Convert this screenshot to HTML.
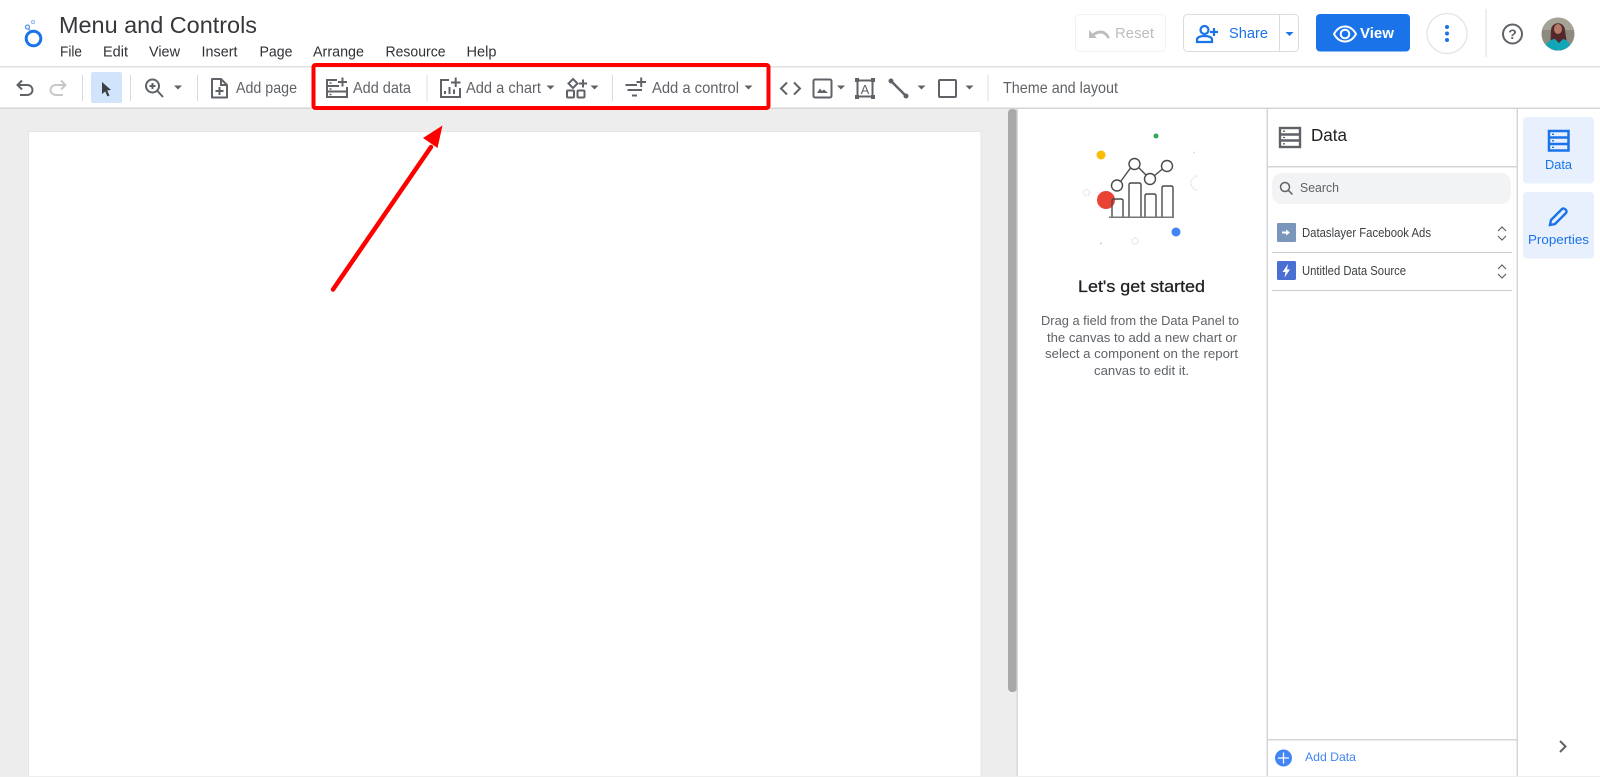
<!DOCTYPE html>
<html><head><meta charset="utf-8"><style>
html,body{margin:0;padding:0;width:1600px;height:777px;overflow:hidden;background:#fff}
svg{display:block}
text{font-family:"Liberation Sans",sans-serif}
.m{font-size:15px;fill:#2f3134}
.t{font-size:16px;fill:#5f6368}
.i{fill:none;stroke:#5f6368;stroke-width:2}
.p{font-size:12.5px;fill:#5f6368}
</style></head><body>
<svg width="1600" height="777" viewBox="0 0 1600 777" xmlns="http://www.w3.org/2000/svg">
<!-- backgrounds -->
<rect x="0" y="108" width="1017" height="669" fill="#ededed"/>
<rect x="28.500" y="131.500" width="952.500" height="660" fill="#fff" stroke="#e6e6e6" stroke-width="1"/>
<rect x="0" y="66" width="1600" height="1.500" fill="#e0e0e0"/>
<rect x="0" y="107.500" width="1600" height="1.500" fill="#d4d5d7"/>
<rect x="1008" y="109" width="9" height="583" rx="4" fill="#a8a8a8"/>
<rect x="1016.500" y="109" width="1.500" height="668" fill="#d8d9db"/>
<rect x="1266.500" y="109" width="1.500" height="668" fill="#d4d5d7"/>
<rect x="1516.500" y="109" width="1.500" height="668" fill="#d4d5d7"/>
<rect x="0" y="776" width="1600" height="1" fill="#eeeeee"/>

<!-- logo -->
<circle cx="33.500" cy="38.500" r="7.300" fill="none" stroke="#1a73e8" stroke-width="3"/>
<circle cx="27.500" cy="27" r="2" fill="none" stroke="#5c93ea" stroke-width="1.300"/>
<circle cx="33" cy="22" r="1.500" fill="none" stroke="#8ab4f8" stroke-width="1"/>
<path d="M28.500 29L30.500 31" stroke="#5c93ea" stroke-width="1.300"/>

<!-- title/menu -->
<text x="59" y="33" font-size="23" fill="#35373a" textLength="198" lengthAdjust="spacingAndGlyphs">Menu and Controls</text>
<text class="m" x="60" y="56.500" textLength="22" lengthAdjust="spacingAndGlyphs">File</text>
<text class="m" x="103" y="56.500" textLength="25" lengthAdjust="spacingAndGlyphs">Edit</text>
<text class="m" x="149" y="56.500" textLength="31" lengthAdjust="spacingAndGlyphs">View</text>
<text class="m" x="201.500" y="56.500" textLength="36" lengthAdjust="spacingAndGlyphs">Insert</text>
<text class="m" x="259.500" y="56.500" textLength="33" lengthAdjust="spacingAndGlyphs">Page</text>
<text class="m" x="313" y="56.500" textLength="51" lengthAdjust="spacingAndGlyphs">Arrange</text>
<text class="m" x="385.500" y="56.500" textLength="60" lengthAdjust="spacingAndGlyphs">Resource</text>
<text class="m" x="466.500" y="56.500" textLength="30" lengthAdjust="spacingAndGlyphs">Help</text>

<!-- top right -->
<rect x="1075.500" y="14.500" width="90" height="37" rx="4" fill="#fff" stroke="#f1f1f1"/>
<path d="M1089 30L1092.500 33.500C1095 31.500 1098 30.500 1100.500 30.500C1105 30.500 1108 33.500 1110 38L1107.500 38.500C1105.500 35 1103 33.500 1100.500 33.500C1098.500 33.500 1096.500 34.500 1094.500 35.500L1097 38H1089Z" fill="#bdbdbd"/>
<text x="1115" y="38" font-size="15" fill="#bdbdbd" textLength="39" lengthAdjust="spacingAndGlyphs">Reset</text>
<rect x="1183.500" y="14.500" width="115" height="37" rx="4" fill="#fff" stroke="#dadce0"/>
<path d="M1279.500 14.500V51.500" stroke="#dadce0"/>
<circle cx="1204.500" cy="30" r="4" fill="none" stroke="#1a73e8" stroke-width="2.200"/>
<path d="M1197 42V39.500C1197 37 1201 36 1204.500 36C1208 36 1212 37 1212 39.500V42Z" fill="none" stroke="#1a73e8" stroke-width="2.200"/>
<path d="M1210 32H1218M1214 28V36" stroke="#1a73e8" stroke-width="2.200" fill="none"/>
<text x="1229" y="38" font-size="15" fill="#1a73e8" textLength="39" lengthAdjust="spacingAndGlyphs">Share</text>
<path d="M1285.500 32H1293.500L1289.500 36Z" fill="#1a73e8"/>
<rect x="1316" y="14" width="94" height="37.500" rx="4" fill="#1a73e8"/>
<path d="M1334 34C1337 28.500 1341 26.500 1345 26.500C1349 26.500 1353 28.500 1356 34C1353 39.500 1349 41.500 1345 41.500C1341 41.500 1337 39.500 1334 34Z" fill="none" stroke="#fff" stroke-width="2"/>
<circle cx="1345" cy="34" r="4.300" fill="none" stroke="#fff" stroke-width="2"/>
<text x="1360" y="38" font-size="15" font-weight="bold" fill="#fff" textLength="34" lengthAdjust="spacingAndGlyphs">View</text>
<circle cx="1447" cy="33.500" r="20" fill="#fff" stroke="#e4e5e7" stroke-width="1.300"/>
<circle cx="1447" cy="27" r="2" fill="#1a73e8"/><circle cx="1447" cy="33.500" r="2" fill="#1a73e8"/><circle cx="1447" cy="40" r="2" fill="#1a73e8"/>
<rect x="1485.500" y="9" width="1" height="48" fill="#dadce0"/>
<circle cx="1512.500" cy="34" r="9.500" fill="none" stroke="#5f6368" stroke-width="2"/>
<text x="1512.500" y="39" text-anchor="middle" font-size="14" font-weight="bold" fill="#5f6368">?</text>
<clipPath id="av"><circle cx="1558" cy="34" r="16.500"/></clipPath>
<g clip-path="url(#av)">
<rect x="1541" y="17" width="34" height="34" fill="#8d8a80"/>
<rect x="1541" y="17" width="34" height="13" fill="#a5a296"/>
<path d="M1550 51L1551 30C1552 21 1564 21 1565 30L1568 51Z" fill="#54282b"/>
<ellipse cx="1558" cy="29" rx="4" ry="5" fill="#b57a6a"/>
<path d="M1543 51C1545 43 1551 39 1555 39L1559 43L1563 39C1568 40 1571 45 1572 51Z" fill="#11a5b8"/>
</g>

<!-- toolbar -->
<path d="M18 85H27C31 85 32.500 88 32.500 90C32.500 92.500 30.500 95 27 95H20M22 80.500L17.500 85L22 89.500" class="i"/>
<path d="M65 85H56C52 85 50.500 88 50.500 90C50.500 92.500 52.500 95 56 95H63M61 80.500L65.500 85L61 89.500" fill="none" stroke="#c6c8ca" stroke-width="2"/>
<rect x="82" y="75" width="1" height="26" fill="#dadce0"/>
<rect x="91" y="72" width="31" height="31" rx="2" fill="#d2e3fc"/>
<path d="M102 82L111 90L107.200 90.500L109.500 95.500L107.500 96.500L105.200 91.500L102 94Z" fill="#3c4043"/>
<rect x="130" y="75" width="1" height="26" fill="#dadce0"/>
<circle cx="152.500" cy="86" r="6.500" class="i"/>
<path d="M157.500 91L163 97M149.500 86H155.500M152.500 83V89" class="i"/>
<path d="M174 85.500H182L178 89.500Z" fill="#5f6368"/>
<rect x="197" y="75" width="1" height="26" fill="#dadce0"/>
<path d="M212 79H221L227 85V97.500H212Z" class="i" stroke-linejoin="round"/>
<path d="M221 79V85H227M215.500 91H223.500M219.500 87V95" class="i"/>
<text class="t" x="236" y="93" textLength="61" lengthAdjust="spacingAndGlyphs">Add page</text>

<!-- add data group -->
<path d="M337 80H327V97H347V87M327 86H339M327 91.500H347" class="i"/>
<path d="M329.500 83H331.500M329.500 89H331.500M329.500 94.500H331.500" stroke="#5f6368" stroke-width="1.500"/>
<path d="M338 82H347M342.500 77.500V86.500" class="i"/>
<text class="t" x="353" y="93" textLength="58" lengthAdjust="spacingAndGlyphs">Add data</text>
<rect x="426.500" y="75" width="1" height="26" fill="#dadce0"/>
<path d="M449 80H441V97H460V88" class="i"/>
<path d="M445 91V94M449.500 87V94M454 89.500V94" class="i"/>
<path d="M451 82.500H460.500M455.700 77.500V87" class="i"/>
<text class="t" x="466" y="93" textLength="75" lengthAdjust="spacingAndGlyphs">Add a chart</text>
<path d="M546.500 85.500H554.500L550.500 89.500Z" fill="#5f6368"/>
<path d="M573 79L577.500 83.500L573 88L568.500 83.500Z" class="i"/>
<path d="M579 83.500H587M583 79.500V87.500" class="i"/>
<rect x="567" y="90.500" width="7" height="7" rx="1" class="i"/>
<rect x="577.500" y="90.500" width="7" height="7" rx="1" class="i"/>
<path d="M590.500 85.500H598.500L594.500 89.500Z" fill="#5f6368"/>
<rect x="612" y="75" width="1" height="26" fill="#dadce0"/>
<path d="M625.500 85H637M627.500 90H642M632 95.500H637" class="i"/>
<path d="M636.500 82H646M641.200 77.500V87" class="i"/>
<text class="t" x="652" y="93" textLength="87" lengthAdjust="spacingAndGlyphs">Add a control</text>
<path d="M744.500 85.500H752.500L748.500 89.500Z" fill="#5f6368"/>

<!-- red box & arrow -->
<rect x="313.500" y="65" width="455" height="43" rx="2" fill="none" stroke="#fe0000" stroke-width="4"/>
<path d="M333 289.500L431 147" stroke="#fe0000" stroke-width="4.500" stroke-linecap="round"/>
<path d="M442.500 125.500L423 138L437.500 148Z" fill="#fe0000"/>

<!-- right tools -->
<path d="M787 82.500L781 88.500L787 94.500M794 82.500L800 88.500L794 94.500" class="i"/>
<rect x="813.500" y="79.500" width="18" height="18" rx="1.500" class="i"/>
<path d="M817 93L820 88.500L822 91L824 89.500L828 93Z" fill="#5f6368"/>
<path d="M837 85.500H845L841 89.500Z" fill="#5f6368"/>
<rect x="857.500" y="80.500" width="15" height="16" class="i"/>
<rect x="855" y="78" width="4" height="4" fill="#5f6368"/><rect x="871" y="78" width="4" height="4" fill="#5f6368"/><rect x="855" y="95" width="4" height="4" fill="#5f6368"/><rect x="871" y="95" width="4" height="4" fill="#5f6368"/>
<text x="865" y="94" text-anchor="middle" font-size="13" fill="#5f6368">A</text>
<path d="M891 81L906 96" stroke="#5f6368" stroke-width="2.500"/>
<circle cx="891" cy="81" r="2.500" fill="#5f6368"/><circle cx="906" cy="96" r="2.500" fill="#5f6368"/>
<path d="M917.500 85.500H925.500L921.500 89.500Z" fill="#5f6368"/>
<rect x="939" y="80" width="17" height="17" rx="1" class="i"/>
<path d="M965.500 85.500H973.500L969.500 89.500Z" fill="#5f6368"/>
<rect x="987.500" y="75" width="1" height="26" fill="#dadce0"/>
<text class="t" x="1003" y="93" textLength="115" lengthAdjust="spacingAndGlyphs">Theme and layout</text>

<!-- illustration -->
<circle cx="1101" cy="155" r="4.500" fill="#fbbc04"/>
<circle cx="1156" cy="136" r="2.500" fill="#34a853"/>
<circle cx="1106" cy="200" r="9" fill="#ea4335"/>
<circle cx="1176" cy="232" r="4.500" fill="#4285f4"/>
<g fill="none" stroke="#4a4a4a" stroke-width="1.400">
<path d="M1112 217V201C1112 199.500 1113 199 1114 199H1121C1122 199 1123 199.500 1123 201V217"/>
<path d="M1129 217V185C1129 183.500 1130 183 1131 183H1139C1140 183 1141 183.500 1141 185V217"/>
<path d="M1145 217V196C1145 194.500 1146 194 1147 194H1154C1155 194 1156 194.500 1156 196V217"/>
<path d="M1162 217V188C1162 186.500 1163 186 1164 186H1171C1172 186 1173 186.500 1173 188V217"/>
<circle cx="1117" cy="185.500" r="5.500"/><circle cx="1134.500" cy="164" r="5.500"/><circle cx="1150" cy="179" r="5.500"/><circle cx="1167" cy="166" r="5.500"/>
<path d="M1121 181L1130.500 168M1139 168L1146 175M1154 176L1162.500 169"/>
</g>
<rect x="1109" y="216.500" width="65" height="1.500" fill="#777"/>
<circle cx="1086.500" cy="192.500" r="3" fill="none" stroke="#ddd" stroke-dasharray="1 1" stroke-width="1.500"/>
<circle cx="1135" cy="241" r="3" fill="none" stroke="#ddd" stroke-dasharray="1 1" stroke-width="1.500"/>
<path d="M1198 176A7 7 0 0 0 1198 190" fill="none" stroke="#ddd" stroke-dasharray="1 1" stroke-width="1.500"/>
<circle cx="1194" cy="152.500" r="1" fill="#ddd"/><circle cx="1101" cy="243.500" r="1" fill="#ccc"/>

<!-- get started -->
<text x="1078" y="292" font-size="16.500" fill="#202124" stroke="#202124" stroke-width=".25" textLength="127" lengthAdjust="spacingAndGlyphs">Let's get started</text>
<text class="p" x="1041" y="325" textLength="198" lengthAdjust="spacingAndGlyphs">Drag a field from the Data Panel to</text>
<text class="p" x="1047" y="342" textLength="190" lengthAdjust="spacingAndGlyphs">the canvas to add a new chart or</text>
<text class="p" x="1045" y="358" textLength="193" lengthAdjust="spacingAndGlyphs">select a component on the report</text>
<text class="p" x="1094" y="375" textLength="95" lengthAdjust="spacingAndGlyphs">canvas to edit it.</text>

<!-- data panel -->
<rect x="1267" y="166" width="250" height="1.500" fill="#d4d5d7"/>
<g fill="none" stroke="#5f6368" stroke-width="2.400"><rect x="1280" y="128" width="20" height="19"/><path d="M1280 134.500H1300M1280 140.500H1300"/></g>
<path d="M1283 131.200H1285M1283 137.500H1285M1283 143.800H1285" stroke="#5f6368" stroke-width="1.300"/>
<text x="1311" y="141" font-size="17.500" fill="#202124" textLength="36" lengthAdjust="spacingAndGlyphs">Data</text>
<rect x="1272" y="173" width="239" height="31" rx="10" fill="#f1f3f4"/>
<circle cx="1285" cy="187" r="4.500" fill="none" stroke="#5f6368" stroke-width="1.500"/>
<path d="M1288.300 190.300L1292.500 194.500" stroke="#5f6368" stroke-width="1.500"/>
<text x="1300" y="192" font-size="12.500" fill="#5f6368" textLength="39" lengthAdjust="spacingAndGlyphs">Search</text>
<rect x="1277" y="223" width="19" height="19" rx="1" fill="#7a97bb"/>
<path d="M1282 231.500H1286V229.500L1290 232.500L1286 235.500V233.500H1282Z" fill="#fff"/>
<text x="1302" y="237" font-size="12.500" fill="#3c4043" textLength="129" lengthAdjust="spacingAndGlyphs">Dataslayer Facebook Ads</text>
<path d="M1498 231L1502 227L1506 231M1498 236L1502 240L1506 236" fill="none" stroke="#5f6368" stroke-width="1.200"/>
<rect x="1272" y="252" width="240" height="1" fill="#c8cacc"/>
<rect x="1277" y="261" width="19" height="19" rx="1.500" fill="#4a6fd2"/>
<path d="M1288 264L1282.500 272H1285.500L1284.500 277.500L1290 269.500H1287Z" fill="#fff"/>
<text x="1302" y="275" font-size="12.500" fill="#3c4043" textLength="104" lengthAdjust="spacingAndGlyphs">Untitled Data Source</text>
<path d="M1498 269L1502 265L1506 269M1498 274L1502 278L1506 274" fill="none" stroke="#5f6368" stroke-width="1.200"/>
<rect x="1272" y="290" width="240" height="1" fill="#c8cacc"/>
<rect x="1267" y="739" width="250" height="1.500" fill="#d4d5d7"/>
<circle cx="1283.500" cy="758" r="8.500" fill="#4285f4"/>
<path d="M1278 758H1289M1283.500 752.500V763.500" stroke="#fff" stroke-width="1.300"/>
<text x="1305" y="761" font-size="12" fill="#4285f4" textLength="51" lengthAdjust="spacingAndGlyphs">Add Data</text>

<!-- side tabs -->
<rect x="1523" y="117" width="71" height="66.500" rx="4" fill="#e8f0fe"/>
<g fill="none" stroke="#1a73e8" stroke-width="2.500"><rect x="1549" y="131" width="19.500" height="19.500"/><path d="M1549 137.500H1568.500M1549 144H1568.500"/></g>
<path d="M1552 134.300H1554M1552 140.800H1554M1552 147.300H1554" stroke="#1a73e8" stroke-width="1.300"/>
<text x="1545" y="169" font-size="12.500" fill="#1a73e8" textLength="27" lengthAdjust="spacingAndGlyphs">Data</text>
<rect x="1523" y="192" width="71" height="66.500" rx="4" fill="#e8f0fe"/>
<path d="M1550 225L1551 220L1562 209C1564 207 1568 211 1566 213L1555 224Z" fill="#e8f0fe" stroke="#1a73e8" stroke-width="2.400"/>
<text x="1528" y="244" font-size="12.500" fill="#1a73e8" textLength="61" lengthAdjust="spacingAndGlyphs">Properties</text>
<path d="M1560 741L1565.500 746.500L1560 752" fill="none" stroke="#5f6368" stroke-width="2"/>
</svg>
</body></html>
